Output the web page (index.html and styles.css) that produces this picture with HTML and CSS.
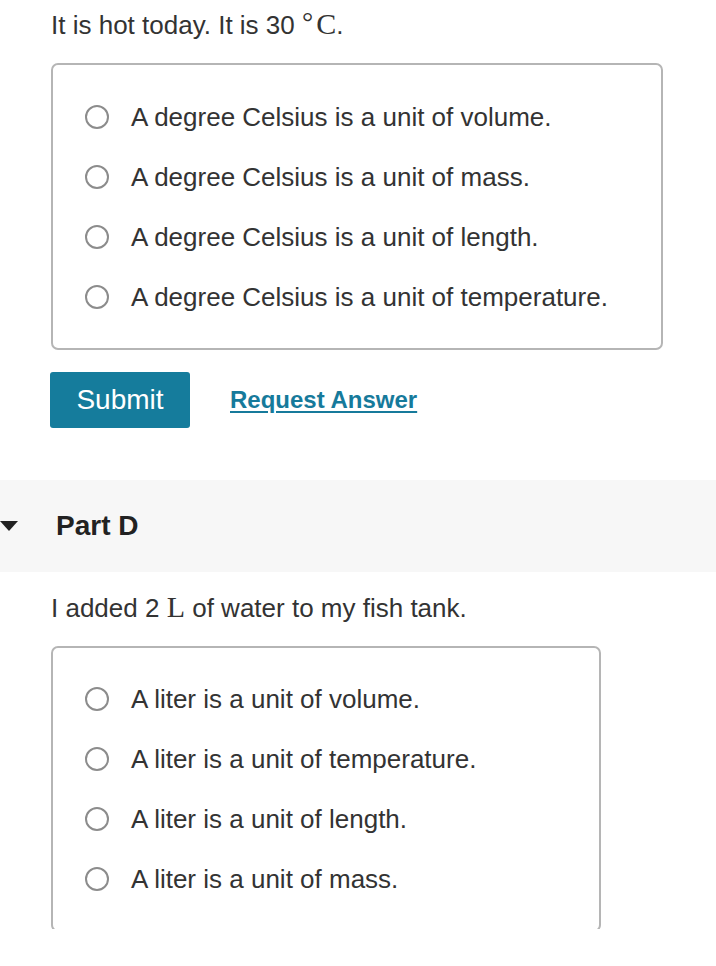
FILE: index.html
```html
<!DOCTYPE html>
<html lang="en">
<head>
    <meta charset="UTF-8">
    <meta name="viewport" content="width=device-width, initial-scale=1.0">
    <title>Units quiz</title>
    <link rel="stylesheet" href="styles.css">
</head>
<body>
    <div class="page">
        <!-- Part C (tail) -->
        <div class="part-body">
            <p class="prompt">It is hot today. It is 30 <span class="math"><sup>&deg;</sup>C</span>.</p>

            <div class="choices wide">
                <label class="choice"><input type="radio" name="partC"><span>A degree Celsius is a unit of volume.</span></label>
                <label class="choice"><input type="radio" name="partC"><span>A degree Celsius is a unit of mass.</span></label>
                <label class="choice"><input type="radio" name="partC"><span>A degree Celsius is a unit of length.</span></label>
                <label class="choice"><input type="radio" name="partC"><span>A degree Celsius is a unit of temperature.</span></label>
            </div>

            <div class="actions">
                <button class="submit-btn">Submit</button>
                <a href="#" class="request-link">Request Answer</a>
            </div>
        </div>

        <!-- Part D header -->
        <div class="part-header">
            <span class="caret"></span>
            <h2>Part D</h2>
        </div>

        <div class="part-body">
            <p class="prompt">I added 2 <span class="math">L</span> of water to my fish tank.</p>

            <div class="choices narrow">
                <label class="choice"><input type="radio" name="partD"><span>A liter is a unit of volume.</span></label>
                <label class="choice"><input type="radio" name="partD"><span>A liter is a unit of temperature.</span></label>
                <label class="choice"><input type="radio" name="partD"><span>A liter is a unit of length.</span></label>
                <label class="choice"><input type="radio" name="partD"><span>A liter is a unit of mass.</span></label>
            </div>
        </div>
    </div>
</body>
</html>
```

FILE: styles.css
```css
body {
    margin: 0;
    font-family: "Liberation Sans", Arial, sans-serif;
    color: #333;
    background: #fff;
}
.page {
    height: 929px;
    overflow: hidden;
}
.part-body {
    padding: 0 51px;
}
.prompt {
    margin: 0;
    height: 50px;
    font-size: 26px;
    line-height: 51px;
}
.math {
    font-family: "Liberation Serif", "Times New Roman", serif;
    font-size: 30px;
    line-height: 0;
}
.math sup {
    font-size: 28px;
    vertical-align: 3px;
    line-height: 0;
    margin-right: 3px;
}
.choices {
    border: 2px solid #b5b5b5;
    border-radius: 7px;
    padding: 22px 0 21px 32px;
    margin-top: 13px;
}
.choices.wide {
    width: 576px;
}
.choices.narrow {
    width: 514px;
    padding-top: 21px;
}
.choice {
    display: flex;
    align-items: center;
    gap: 22px;
    height: 60px;
    font-size: 26px;
    cursor: pointer;
}
.choice input {
    appearance: none;
    flex-shrink: 0;
    margin: 0;
    width: 24px;
    height: 24px;
    border: 2px solid #8c8c8c;
    border-radius: 50%;
    background: #fff;
}
.actions {
    display: flex;
    align-items: center;
    gap: 40px;
    margin-top: 22px;
    margin-left: -1px;
}
.submit-btn {
    width: 140px;
    height: 56px;
    border: none;
    border-radius: 3px;
    background-color: #157c9c;
    color: #fff;
    font-family: inherit;
    font-size: 28px;
    cursor: pointer;
}
.request-link {
    color: #167a9b;
    font-weight: bold;
    font-size: 24px;
    text-decoration: underline;
    text-decoration-thickness: 2px;
    text-underline-offset: 3px;
}
.part-header {
    display: flex;
    align-items: center;
    height: 92px;
    margin-top: 52px;
    margin-bottom: 11px;
    background: #f7f7f7;
}
.caret {
    width: 0;
    height: 0;
    border-left: 9px solid transparent;
    border-right: 9px solid transparent;
    border-top: 10px solid #222;
    margin-right: 38px;
}
.part-header h2 {
    margin: 0;
    font-size: 28px;
    font-weight: bold;
    color: #222;
}
```
